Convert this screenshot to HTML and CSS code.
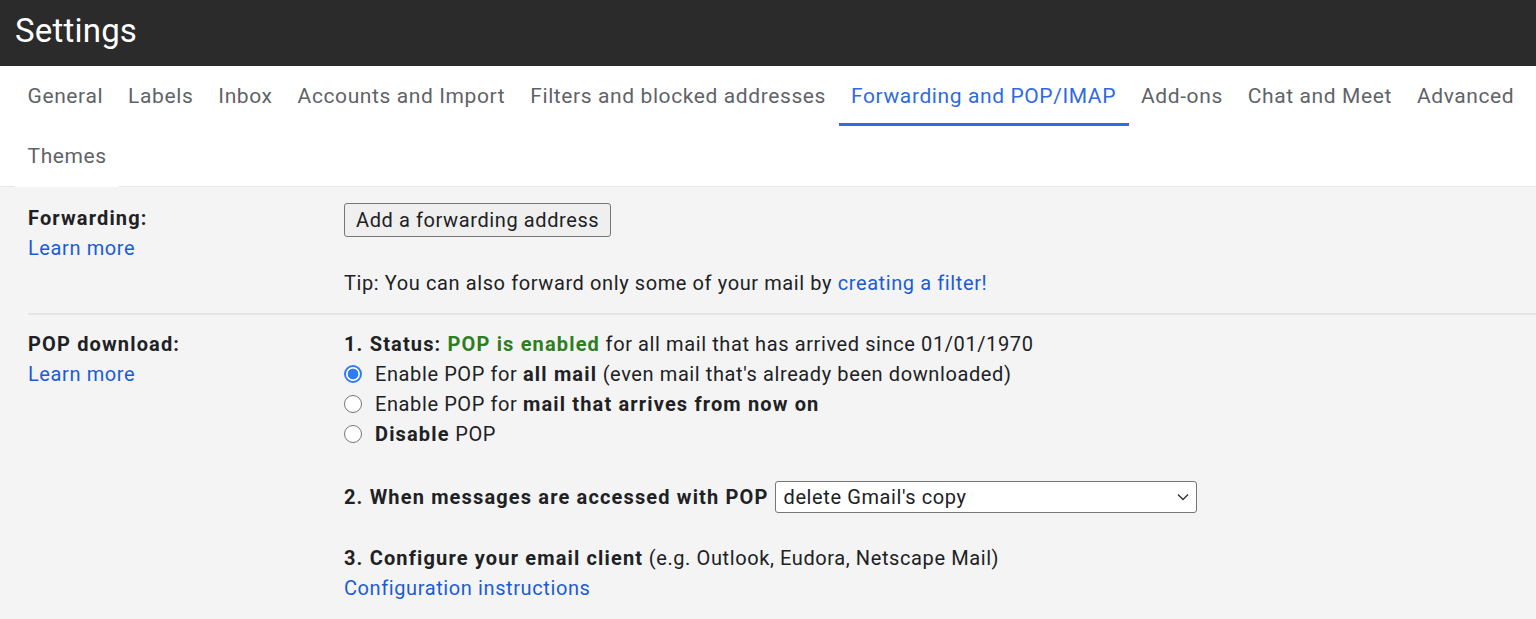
FILE: index.html
```html
<!DOCTYPE html>
<html>
<head>
    <meta charset="utf-8">
    <title>Settings</title>
<link rel="stylesheet" href="styles.css">
</head>
<body>
	<div class="topbar">
		<h1 class="title">Settings</h1>
	</div>

	<!-- tabs -->
	<div class="tabs">
		<a class="tab">General</a>
		<a class="tab">Labels</a>
		<a class="tab">Inbox</a>
		<a class="tab">Accounts and Import</a>
		<a class="tab">Filters and blocked addresses</a>
		<a class="tab active">Forwarding and POP/IMAP</a>
		<a class="tab">Add-ons</a>
		<a class="tab">Chat and Meet</a>
		<a class="tab">Advanced</a>
		<a class="tab last">Themes</a>
	</div>

	<div class="content">
		<div class="row fwd">
			<div class="label">
				<b>Forwarding:</b>
				<a class="link">Learn more</a>
			</div>
			<div class="value">
				<button class="btn">Add a forwarding address</button>
				<p class="tip">Tip: You can also forward only some of your mail by <a class="link">creating a filter!</a></p>
			</div>
		</div>

		<div class="row pop">
			<div class="label">
				<b>POP download:</b>
				<a class="link">Learn more</a>
			</div>
			<div class="value">
				<div class="line"><b>1. Status: <span class="green">POP is enabled</span></b> for all mail that has arrived since 01/01/1970</div>
				<label class="radio"><span class="dot checked"></span>Enable POP for&nbsp;<b>all mail</b>&nbsp;(even mail that's already been downloaded)</label>
				<label class="radio"><span class="dot"></span>Enable POP for&nbsp;<b>mail that arrives from now on</b></label>
				<label class="radio"><span class="dot"></span><b>Disable</b>&nbsp;POP</label>

				<div class="line step2"><b>2. When messages are accessed with POP</b>
					<div class="select">delete Gmail's copy
						<svg class="chev" width="12" height="8" viewBox="0 0 12 8"><path d="M1 1.5l5 5 5-5" fill="none" stroke="#333" stroke-width="1.4"/></svg>
					</div>
				</div>

				<div class="line step3"><b>3. Configure your email client</b> (e.g. Outlook, Eudora, Netscape Mail)</div>
				<a class="link">Configuration instructions</a>
			</div>
		</div>
	</div>
</body>
</html>
```

FILE: styles.css
```css
body { margin:0; background-color:#f4f4f4; font-family:Roboto, "Liberation Sans", Arial, sans-serif; color:#202124; overflow:hidden; }

.topbar { background-color:#2b2b2b; height:66px; display:flex; align-items:center; padding-left:15px; }
.title { margin:0 0 5px 0; color:#fff; font-weight:400; font-size:33px; letter-spacing:0.2px; }

.tabs { background:#fff; display:flex; flex-wrap:wrap; padding-left:15px; padding-right:4px; border-bottom:1px solid #e8e8e8; }
.tab { color:#5f6368; font-size:21px; letter-spacing:0.6px; height:60px; line-height:60px; padding:0 12.5px; box-sizing:border-box; cursor:pointer; }
.tab.active { color:#2f6ae0; border-bottom:3px solid #2f6ae0; }
.tab.last { height:60px; margin-bottom:-1px; border-bottom:1px solid #fff; box-sizing:content-box; }

.content { padding:0 0 0 28px; }
.row { display:flex; font-size:20px; line-height:30px; letter-spacing:0.6px; }
.row b { letter-spacing:1.15px; }
.row.fwd { padding-top:16px; padding-bottom:15px; border-bottom:2px solid #e6e6e6; }
.row.pop { padding-top:14px; }

.label { width:316px; display:flex; flex-direction:column; }
.label b { font-weight:700; color:#202124; }
.link { color:#1a5cd6; cursor:pointer; }
.value { display:flex; flex-direction:column; align-items:flex-start; }

.btn { font-family:inherit; font-size:20px; letter-spacing:0.6px; color:#202124; background:#efefef; border:1px solid #767676; border-radius:3px; height:34px; padding:0 11px; margin-bottom:31px; }
.tip { margin:0; }

.green { color:#2e7d1f; }
.radio { display:flex; align-items:center; }
.dot { width:16px; height:16px; border:1px solid #777; border-radius:50%; background:#fff; margin:0 13px 0 0; box-sizing:content-box; }
.dot.checked { width:14px; height:14px; border:2px solid #2f7cf6; background:radial-gradient(circle, #2f7cf6 0 5px, #fff 5.7px); }

.step2 { display:flex; align-items:center; margin-top:32px; }
.select { margin-left:6px; width:404px; height:30px; line-height:30px; background:#fff; border:1px solid #767676; border-radius:3px; padding:0 8px; display:flex; justify-content:space-between; align-items:center; letter-spacing:0.6px; }
.chev { margin-right:-1px; }
.step3 { margin-top:30px; }
```
